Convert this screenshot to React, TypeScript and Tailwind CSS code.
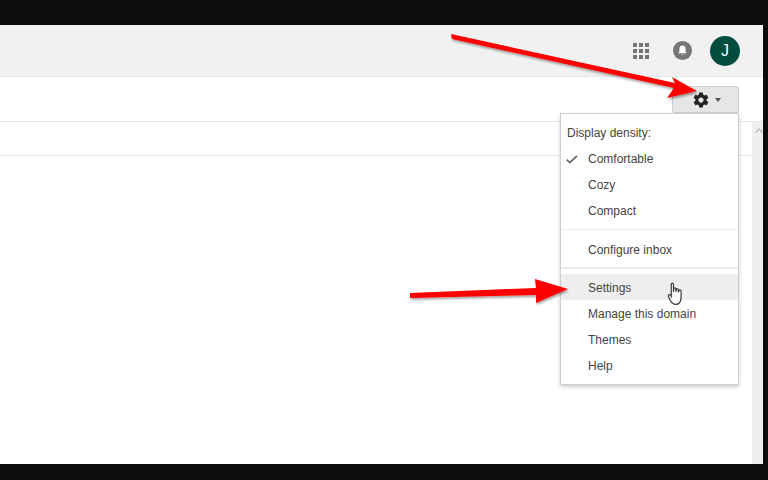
const font = { fontFamily: '"Liberation Sans", Arial, sans-serif' };

function Row({ label, active, check, className = '' }: { label: string; active?: boolean; check?: boolean; className?: string }) {
  return (
    <div className={`relative flex h-[26px] items-center pl-[27px] text-[12px] text-[#444] ${active ? 'bg-[#eeeeee]' : ''} ${className}`}>
      {check && (
        <svg className="absolute left-[5px] top-[9px]" width="12" height="9" viewBox="0 0 12 9">
          <path d="M0.8 4.6 L3.8 7.6 L11 0.8" fill="none" stroke="#666" strokeWidth="1.8" />
        </svg>
      )}
      {label}
    </div>
  );
}

function Arrows() {
  return (
    <svg className="pointer-events-none absolute left-0 top-0" width="768" height="480" viewBox="0 0 768 480">
      <defs>
        <filter id="arrowShadow" x="-10%" y="-50%" width="120%" height="200%">
          <feDropShadow dx="1" dy="2" stdDeviation="1.2" floodColor="#000" floodOpacity="0.35" />
        </filter>
      </defs>
      <g filter="url(#arrowShadow)" fill="#ff0000">
        <polygon points="451,34 452,39 674,88 667,98 697,91 672,77 675,83" />
        <polygon points="410,293 410,298 536,295 536,303 568,289 535,279 536,288" />
      </g>
    </svg>
  );
}

function HandCursor() {
  return (
    <svg className="absolute left-[667px] top-[282px]" width="17" height="24" viewBox="0 0 15 22">
      <path
        d="M3.6 2 C3.6 0.6 5.6 0.6 5.6 2 L5.6 9 L6 6 C6.3 5 7.8 5.2 7.8 6.3 L7.8 9 L8.3 6.8 C8.6 5.8 10.1 6 10.1 7.1 L10.1 9.5 L10.7 7.8 C11.1 7 12.7 7.2 12.7 8.4 L12.5 15 C12.3 18 11 20.5 7.8 20.5 C5 20.5 3.8 19 2.8 17 L1 13 C0.6 11.8 2 11 2.9 12 L3.6 13.2 Z"
        fill="#fff"
        stroke="#3a3a3a"
        strokeWidth="1.1"
      />
    </svg>
  );
}

export default function App() {
  return (
    <div className="relative flex h-[480px] w-[768px] flex-col overflow-hidden bg-[#0d0d0d]" style={font}>
      <div className="h-[25px] shrink-0" />

      <div className="mr-[5px] flex min-h-0 flex-1 flex-col bg-white">
        {/* Top bar */}
        <div className="flex h-[52px] shrink-0 items-center justify-end border-b border-[#e6e6e6] bg-[#f1f1f1] pr-[23px]">
          <svg className="mr-[24px]" width="16" height="16" viewBox="0 0 16 16" fill="#757575">
            <rect x="0" y="0" width="4" height="4" />
            <rect x="6" y="0" width="4" height="4" />
            <rect x="12" y="0" width="4" height="4" />
            <rect x="0" y="6" width="4" height="4" />
            <rect x="6" y="6" width="4" height="4" />
            <rect x="12" y="6" width="4" height="4" />
            <rect x="0" y="12" width="4" height="4" />
            <rect x="6" y="12" width="4" height="4" />
            <rect x="12" y="12" width="4" height="4" />
          </svg>
          <svg className="mr-[18px]" width="19" height="19" viewBox="0 0 19 19">
            <circle cx="9.5" cy="9.5" r="9.5" fill="#757575" />
            <path d="M9.5 4.5 C7.4 4.5 6.4 6 6.4 8 L6.4 10.6 L5.2 12.2 L13.8 12.2 L12.6 10.6 L12.6 8 C12.6 6 11.6 4.5 9.5 4.5 Z M8.3 13 A1.3 1.3 0 0 0 10.7 13 Z" fill="#fff" />
          </svg>
          <div className="flex h-[30px] w-[30px] items-center justify-center rounded-full bg-[#004d40] text-[16px] text-white">J</div>
        </div>

        {/* Toolbar */}
        <div className="flex h-[45px] shrink-0 items-start justify-end border-b border-[#e5e5e5] pr-[24px] pt-[9px]">
          <div className="flex h-[27px] w-[67px] items-center justify-center gap-[5px] rounded-[2px] border border-[#cfcfcf] bg-[#e6e6e6] pl-[2px]">
            <svg width="18" height="18" viewBox="0 0 24 24" fill="#222">
              <path d="M19.43 12.98c.04-.32.07-.64.07-.98s-.03-.66-.07-.98l2.11-1.65c.19-.15.24-.42.12-.64l-2-3.46c-.12-.22-.39-.3-.61-.22l-2.49 1c-.52-.4-1.08-.73-1.69-.98l-.38-2.65C14.46 2.18 14.25 2 14 2h-4c-.25 0-.46.18-.49.42l-.38 2.65c-.61.25-1.17.59-1.69.98l-2.49-1c-.23-.09-.49 0-.61.22l-2 3.46c-.13.22-.07.49.12.64l2.11 1.65c-.04.32-.07.65-.07.98s.03.66.07.98l-2.11 1.65c-.19.15-.24.42-.12.64l2 3.46c.12.22.39.3.61.22l2.49-1c.52.4 1.08.73 1.69.98l.38 2.65c.03.24.24.42.49.42h4c.25 0 .46-.18.49-.42l.38-2.65c.61-.25 1.17-.59 1.69-.98l2.49 1c.23.09.49 0 .61-.22l2-3.46c.12-.22.07-.49-.12-.64l-2.11-1.65zM12 15.5c-1.93 0-3.5-1.57-3.5-3.5s1.57-3.5 3.5-3.5 3.5 1.57 3.5 3.5-1.57 3.5-3.5 3.5z" />
            </svg>
            <div className="h-0 w-0 border-x-[3.5px] border-t-[4px] border-x-transparent border-t-[#555]" />
          </div>
        </div>

        {/* Content */}
        <div className="flex min-h-0 flex-1">
          <div className="flex-1">
            <div className="h-[34px] border-b border-[#e9e9e9]" />
          </div>
          <div className="flex w-[11px] shrink-0 justify-center bg-[#efefef] pl-[3px] pt-[6px]">
            <svg width="8" height="5" viewBox="0 0 8 5">
              <path d="M0.5 4.5 L4 1 L7.5 4.5" fill="none" stroke="#bbb" strokeWidth="1.4" />
            </svg>
          </div>
        </div>
      </div>

      <div className="h-[16px] shrink-0" />

      {/* Settings menu */}
      <div className="absolute left-[560px] top-[113px] w-[179px] border border-[#cfcfcf] bg-white pb-[5px] pt-[6px] shadow-[0_2px_4px_rgba(0,0,0,0.2)]">
        <div className="flex h-[26px] items-center pl-[6px] text-[12px] text-[#444]">Display density:</div>
        <Row label="Comfortable" check />
        <Row label="Cozy" />
        <Row label="Compact" />
        <div className="mb-[6px] mt-[5px] h-px bg-[#ebebeb]" />
        <Row label="Configure inbox" className="pt-px" />
        <div className="my-[5px] h-[2px] bg-[#ebebeb]" />
        <Row label="Settings" active className="pt-px" />
        <Row label="Manage this domain" className="pt-px" />
        <Row label="Themes" className="pt-px" />
        <Row label="Help" className="mt-px" />
      </div>

      <HandCursor />
      <Arrows />
    </div>
  );
}
